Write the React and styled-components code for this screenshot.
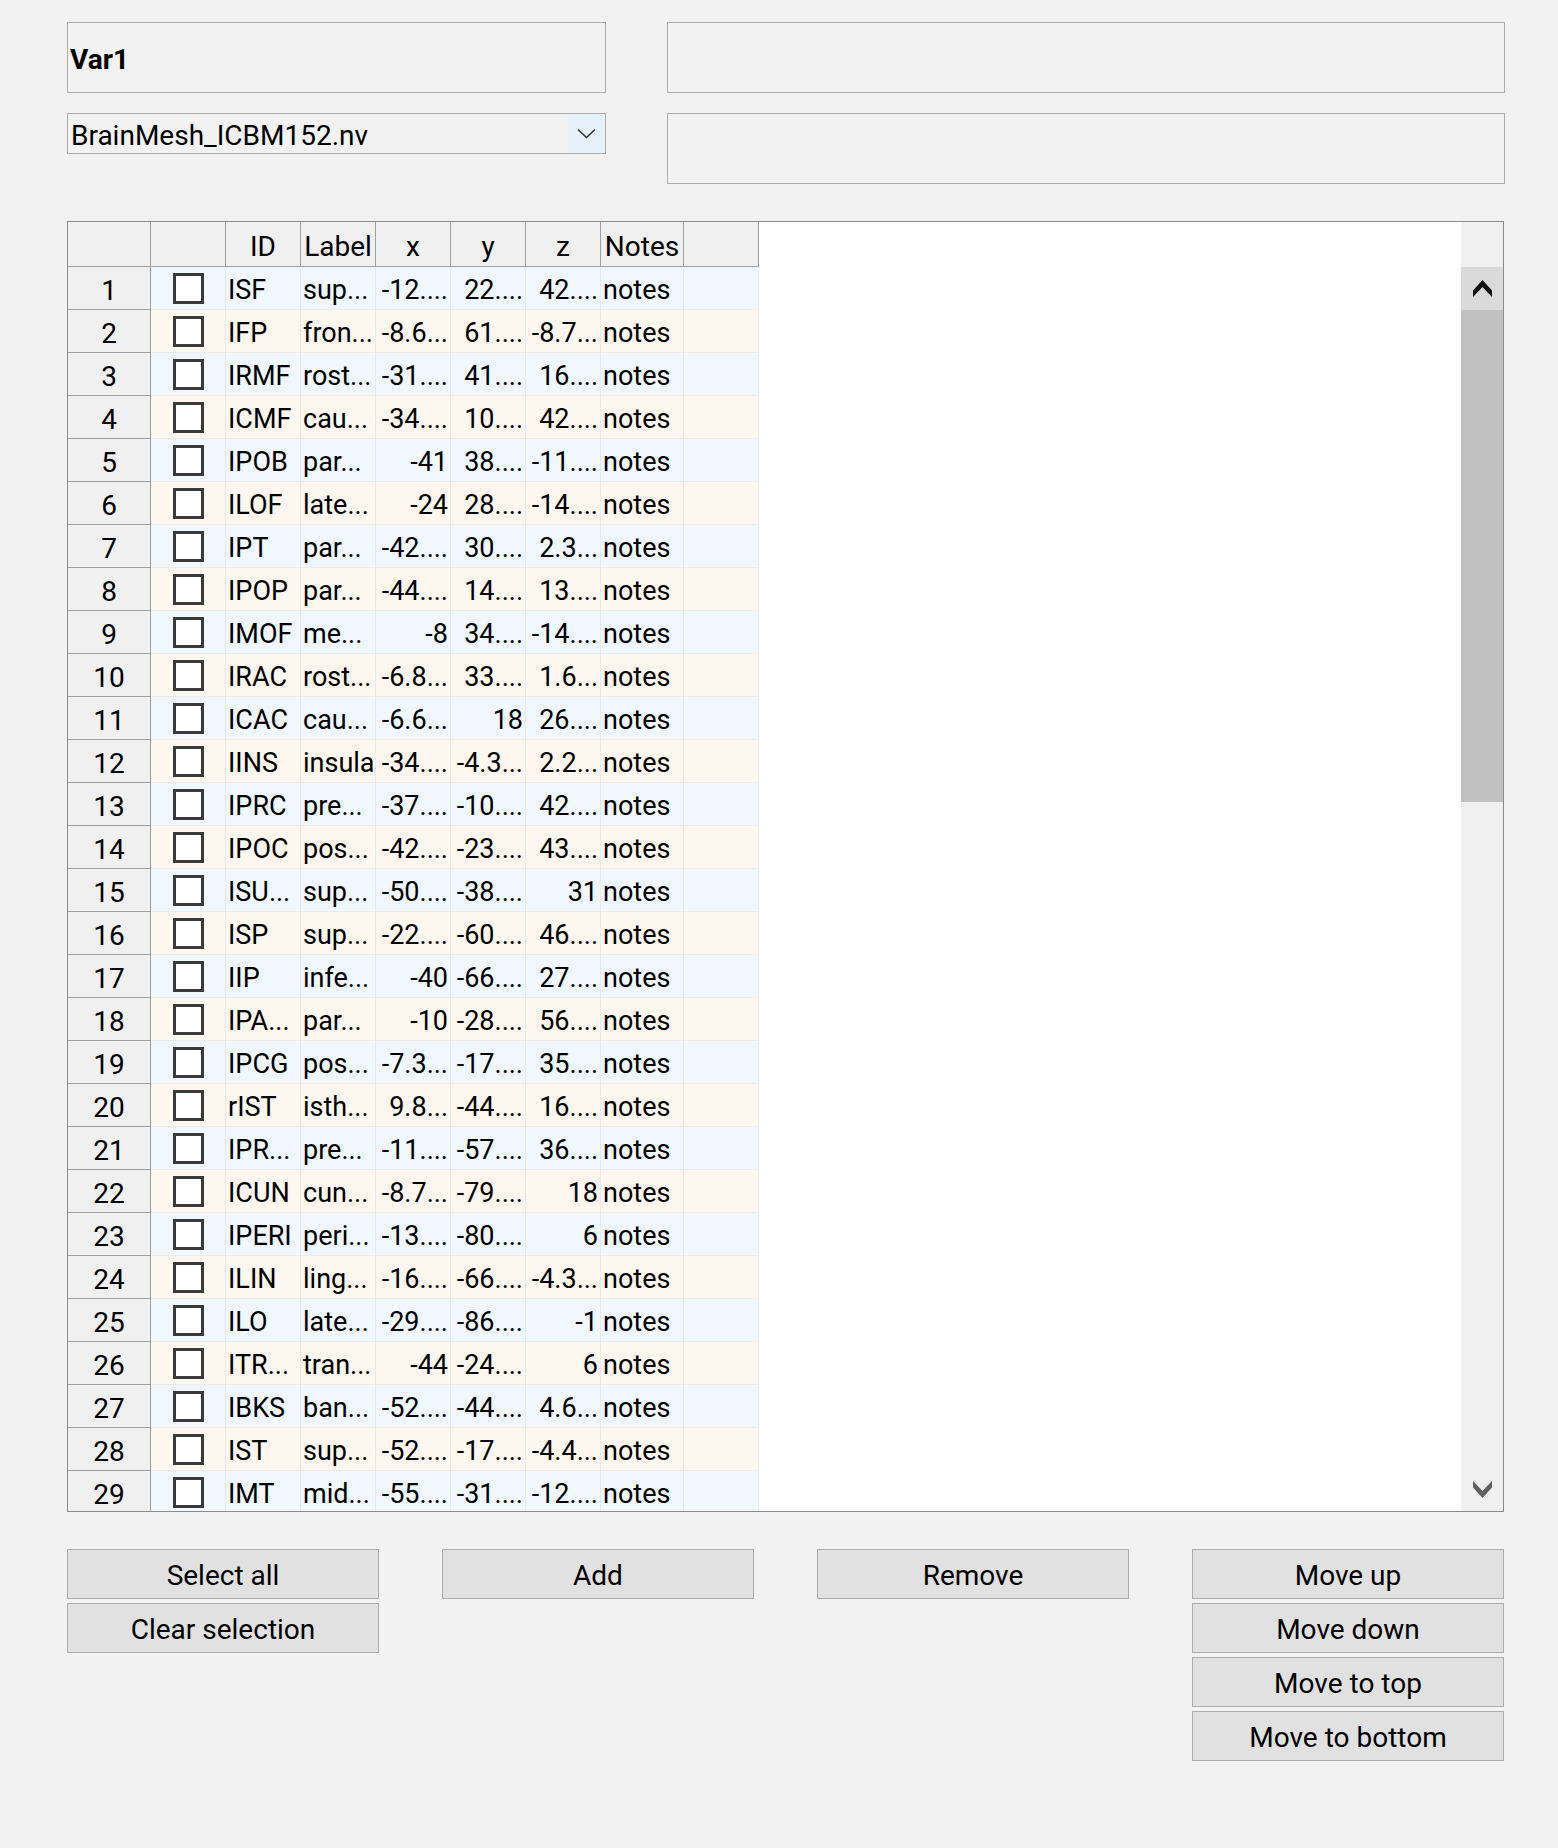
import React from 'react';
import styled, { createGlobalStyle } from 'styled-components';

const GlobalStyle = createGlobalStyle`
  html, body {
    margin: 0;
    padding: 0;
    background: #f2f2f2;
    font-family: Roboto, "Liberation Sans", Arial, sans-serif;
    color: #000;
  }
  * {
    box-sizing: border-box;
  }
`;

const rows = [
  ['ISF', 'sup...', '-12....', '22....', '42....'],
  ['IFP', 'fron...', '-8.6...', '61....', '-8.7...'],
  ['IRMF', 'rost...', '-31....', '41....', '16....'],
  ['ICMF', 'cau...', '-34....', '10....', '42....'],
  ['IPOB', 'par...', '-41', '38....', '-11....'],
  ['ILOF', 'late...', '-24', '28....', '-14....'],
  ['IPT', 'par...', '-42....', '30....', '2.3...'],
  ['IPOP', 'par...', '-44....', '14....', '13....'],
  ['IMOF', 'me...', '-8', '34....', '-14....'],
  ['IRAC', 'rost...', '-6.8...', '33....', '1.6...'],
  ['ICAC', 'cau...', '-6.6...', '18', '26....'],
  ['IINS', 'insula', '-34....', '-4.3...', '2.2...'],
  ['IPRC', 'pre...', '-37....', '-10....', '42....'],
  ['IPOC', 'pos...', '-42....', '-23....', '43....'],
  ['ISU...', 'sup...', '-50....', '-38....', '31'],
  ['ISP', 'sup...', '-22....', '-60....', '46....'],
  ['IIP', 'infe...', '-40', '-66....', '27....'],
  ['IPA...', 'par...', '-10', '-28....', '56....'],
  ['IPCG', 'pos...', '-7.3...', '-17....', '35....'],
  ['rIST', 'isth...', '9.8...', '-44....', '16....'],
  ['IPR...', 'pre...', '-11....', '-57....', '36....'],
  ['ICUN', 'cun...', '-8.7...', '-79....', '18'],
  ['IPERI', 'peri...', '-13....', '-80....', '6'],
  ['ILIN', 'ling...', '-16....', '-66....', '-4.3...'],
  ['ILO', 'late...', '-29....', '-86....', '-1'],
  ['ITR...', 'tran...', '-44', '-24....', '6'],
  ['IBKS', 'ban...', '-52....', '-44....', '4.6...'],
  ['IST', 'sup...', '-52....', '-17....', '-4.4...'],
  ['IMT', 'mid...', '-55....', '-31....', '-12....'],
];

const Page = styled.div`
  width: 1558px;
  min-height: 1848px;
  padding: 22px 0 0 67px;
`;

const TopGrid = styled.div`
  display: grid;
  grid-template-columns: 539px 838px;
  grid-template-rows: 71px 71px;
  column-gap: 61px;
  row-gap: 20px;
`;

const Field = styled.div`
  border: 1px solid #adadad;
  background: #f2f2f2;
  display: flex;
  align-items: center;
  padding: 4px 0 0 2px;
  font-size: 28px;
  font-weight: ${(p) => (p.$bold ? 700 : 400)};
`;

const Dropdown = styled.div`
  align-self: start;
  height: 41px;
  border: 1px solid #adadad;
  display: flex;
  align-items: stretch;
  font-size: 28px;
`;

const DropdownText = styled.div`
  flex: 1;
  display: flex;
  align-items: center;
  padding: 4px 0 0 3px;
`;

const DropdownArrow = styled.div`
  width: 37px;
  background: #e5f1fb;
  display: flex;
  align-items: center;
  justify-content: center;
`;

const Table = styled.div`
  margin-top: 37px;
  width: 1437px;
  height: 1291px;
  border: 1px solid #8a8a90;
  display: flex;
`;

const Viewport = styled.div`
  flex: 1;
  background: #fff;
  overflow: hidden;
`;

const Row = styled.div`
  display: flex;
  height: ${(p) => (p.$header ? 45 : 43)}px;
`;

const HeadCell = styled.div`
  width: ${(p) => p.$w}px;
  flex: none;
  background: #f0f0f0;
  border-right: 1px solid #a0a0a0;
  border-bottom: 1px solid #a0a0a0;
  display: flex;
  align-items: center;
  justify-content: center;
  padding-top: 4px;
  font-size: 28px;
  white-space: nowrap;
  overflow: hidden;
`;

const RowNumber = styled.div`
  width: 83px;
  flex: none;
  background: #f0f0f0;
  border-right: 1px solid #a0a0a0;
  border-bottom: 1px solid #a0a0a0;
  display: flex;
  align-items: center;
  justify-content: center;
  padding-top: 5px;
  font-size: 28px;
`;

const Cell = styled.div`
  width: ${(p) => p.$w}px;
  flex: none;
  background: ${(p) => (p.$odd ? '#f0f7fe' : '#fdf7f0')};
  border-right: 1px solid #e9e9e9;
  border-bottom: 1px solid #ececec;
  display: flex;
  align-items: center;
  justify-content: ${(p) => (p.$right ? 'flex-end' : p.$center ? 'center' : 'flex-start')};
  padding: 3px ${(p) => (p.$right ? 2 : 2)}px 0 2px;
  font-size: 27px;
  white-space: nowrap;
  overflow: hidden;
`;

const Checkbox = styled.span`
  width: 31px;
  height: 31px;
  margin-bottom: 3px;
  background: #fff;
  border: 3px solid #3a3a3a;
`;

const Scrollbar = styled.div`
  width: 42px;
  flex: none;
  display: flex;
  flex-direction: column;
  background: #f0f0f0;
`;

const ScrollCap = styled.div`
  height: 45px;
`;

const ScrollButton = styled.div`
  height: 43px;
  flex: none;
  display: flex;
  align-items: center;
  justify-content: center;
  background: ${(p) => (p.$active ? '#dadada' : '#f0f0f0')};
`;

const Track = styled.div`
  flex: 1;
  display: flex;
  flex-direction: column;
`;

const Thumb = styled.div`
  height: 492px;
  background: #c1c1c1;
`;

const ButtonGrid = styled.div`
  margin-top: 37px;
  display: grid;
  grid-template-columns: repeat(4, 312px);
  column-gap: 63px;
  align-items: start;
`;

const ButtonStack = styled.div`
  display: flex;
  flex-direction: column;
  gap: 4px;
`;

const Button = styled.button`
  height: 50px;
  width: 100%;
  background: #e1e1e1;
  border: 1px solid #adadad;
  border-radius: 0;
  font-family: Roboto, "Liberation Sans", Arial, sans-serif;
  font-size: 28px;
  color: #000;
  padding: 2px 0 0;
  cursor: pointer;
`;

const cols = [75, 75, 75, 75, 75, 75, 83, 75];

const ChevronDown = () => (
  <svg width="19" height="11" viewBox="0 0 19 11">
    <polyline points="1,1.5 9.5,9.5 18,1.5" fill="none" stroke="#333" strokeWidth="1.6" />
  </svg>
);

const ScrollUpIcon = () => (
  <svg width="19" height="17" viewBox="0 0 19 17">
    <polygon points="9.5,0 19,10.5 19,17 9.5,7 0,17 0,10.5" fill="#111" />
  </svg>
);

const ScrollDownIcon = () => (
  <svg width="19" height="17" viewBox="0 0 19 17">
    <polygon points="0,0 9.5,10 19,0 19,6.5 9.5,17 0,6.5" fill="#606060" />
  </svg>
);

export default function App() {
  return (
    <>
      <GlobalStyle />
      <Page>
        <TopGrid>
          <Field $bold>Var1</Field>
          <Field />
          <Dropdown>
            <DropdownText>BrainMesh_ICBM152.nv</DropdownText>
            <DropdownArrow>
              <ChevronDown />
            </DropdownArrow>
          </Dropdown>
          <Field />
        </TopGrid>

        <Table>
          <Viewport>
            <Row $header>
              <HeadCell $w={83} />
              {['', 'ID', 'Label', 'x', 'y', 'z', 'Notes', ''].map((h, i) => (
                <HeadCell key={i} $w={cols[i]}>{h}</HeadCell>
              ))}
            </Row>
            {rows.map((r, i) => {
              const odd = i % 2 === 0;
              return (
                <Row key={i}>
                  <RowNumber>{i + 1}</RowNumber>
                  <Cell $w={cols[0]} $odd={odd} $center>
                    <Checkbox />
                  </Cell>
                  <Cell $w={cols[1]} $odd={odd}>{r[0]}</Cell>
                  <Cell $w={cols[2]} $odd={odd}>{r[1]}</Cell>
                  <Cell $w={cols[3]} $odd={odd} $right>{r[2]}</Cell>
                  <Cell $w={cols[4]} $odd={odd} $right>{r[3]}</Cell>
                  <Cell $w={cols[5]} $odd={odd} $right>{r[4]}</Cell>
                  <Cell $w={cols[6]} $odd={odd}>notes</Cell>
                  <Cell $w={cols[7]} $odd={odd} />
                </Row>
              );
            })}
          </Viewport>
          <Scrollbar>
            <ScrollCap />
            <ScrollButton $active>
              <ScrollUpIcon />
            </ScrollButton>
            <Track>
              <Thumb />
            </Track>
            <ScrollButton>
              <ScrollDownIcon />
            </ScrollButton>
          </Scrollbar>
        </Table>

        <ButtonGrid>
          <ButtonStack>
            <Button>Select all</Button>
            <Button>Clear selection</Button>
          </ButtonStack>
          <ButtonStack>
            <Button>Add</Button>
          </ButtonStack>
          <ButtonStack>
            <Button>Remove</Button>
          </ButtonStack>
          <ButtonStack>
            <Button>Move up</Button>
            <Button>Move down</Button>
            <Button>Move to top</Button>
            <Button>Move to bottom</Button>
          </ButtonStack>
        </ButtonGrid>
      </Page>
    </>
  );
}
